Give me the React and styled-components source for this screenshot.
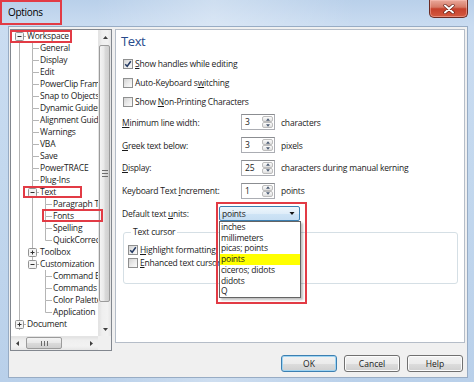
import React from "react";
import styled, { createGlobalStyle } from "styled-components";

const FONT = `"Open Sans", "Noto Sans", "DejaVu Sans", sans-serif`;
const LINE = "#b5b5b5";
const RED = "#e23b45";

const GlobalStyle = createGlobalStyle`
  html, body {
    margin: 0;
    padding: 0;
  }
  body {
    width: 474px;
    height: 382px;
    overflow: hidden;
    font-family: ${FONT};
    font-size: 8.5px;
    letter-spacing: -0.2px;
    color: #1b1b1b;
  }
  * {
    box-sizing: border-box;
  }
`;

const Window = styled.div`
  width: 474px;
  height: 382px;
  display: flex;
  flex-direction: column;
  background:
    linear-gradient(90deg, rgba(255,255,255,0) 20%, rgba(255,255,255,0.3) 45%, rgba(255,255,255,0) 75%),
    linear-gradient(180deg, #b9d0ea 0%, #cadcf1 7%, #c3d8ee 45%, #b9d0ea 100%);
`;

const TitleBar = styled.div`
  height: 26px;
  flex: none;
  display: flex;
  justify-content: space-between;
  align-items: flex-start;
`;

const TitleMark = styled.div`
  height: 25px;
  display: flex;
  align-items: center;
  padding: 0 17px 1px 6px;
  border: 2px solid ${RED};
  font-size: 10px;
  letter-spacing: -0.3px;
  color: #000;
`;

const CloseBtn = styled.div`
  width: 39px;
  height: 18px;
  margin-right: 6px;
  display: flex;
  align-items: center;
  justify-content: center;
  border: 1px solid #6b2a22;
  border-top: none;
  border-radius: 0 0 5px 5px;
  background: linear-gradient(180deg, #eaa99b 0%, #d67a67 42%, #c6412c 52%, #d45a40 100%);
  box-shadow: inset 0 0 0 1px rgba(255, 200, 190, 0.45);
`;

const Client = styled.div`
  flex: 1;
  margin: 0 6px 4px 8px;
  background: #f0f0f0;
  border: 1px solid #98acc4;
  display: grid;
  grid-template-columns: 102px 350px;
  column-gap: 3px;
  align-items: start;
  padding: 2px 2px 0 1px;
`;

/* ---------- tree ---------- */

const TreeBox = styled.div`
  height: 322px;
  display: flex;
  flex-direction: column;
  background: #fff;
  border: 1px solid #82878f;
`;

const TreeBody = styled.div`
  flex: 1;
  min-height: 0;
  display: flex;
`;

const TreeList = styled.div`
  flex: 1;
  min-width: 0;
  padding-left: 2px;
`;

const Row = styled.div`
  position: relative;
  height: 12px;
  display: flex;
  align-items: center;
`;

const Label = styled.span`
  flex: 1 1 auto;
  min-width: 0;
  padding-left: 1px;
  line-height: 12px;
  white-space: nowrap;
  overflow: hidden;
`;

const Mark = styled.span`
  position: absolute;
  z-index: 3;
  left: ${(p) => p.$left}px;
  top: ${(p) => p.$top}px;
  width: ${(p) => p.$width}px;
  height: ${(p) => p.$height}px;
  border: 2px solid ${RED};
  pointer-events: none;
`;

const VScroll = styled.div`
  width: 13px;
  flex: none;
  display: flex;
  flex-direction: column;
  background: linear-gradient(90deg, #e2e2e2 0%, #efefef 25%, #f2f2f2 70%, #e6e6e6 100%);
  border-left: 1px solid #e4e4e4;
`;

const ArrowCell = styled.div`
  flex: none;
  width: ${(p) => (p.$h ? "13px" : "auto")};
  height: ${(p) => (p.$h ? "auto" : "14px")};
  display: flex;
  align-items: center;
  justify-content: center;
`;

const VThumb = styled.div`
  height: 257px;
  margin: 1px 1px 0 0;
  display: flex;
  align-items: center;
  justify-content: center;
  border: 1px solid #9b9b9b;
  border-radius: 2px;
  background: linear-gradient(90deg, #f4f4f4 0%, #e9e9e9 45%, #dadada 55%, #cfcfcf 100%);
`;

const Spacer = styled.div`
  flex: 1;
`;

const HRow = styled.div`
  height: 14px;
  flex: none;
  display: flex;
`;

const HScroll = styled.div`
  flex: 1;
  display: flex;
  background: linear-gradient(180deg, #e2e2e2 0%, #efefef 25%, #f2f2f2 70%, #e6e6e6 100%);
  border-top: 1px solid #e4e4e4;
`;

const HThumb = styled.div`
  width: 36px;
  margin: 0 0 1px 2px;
  display: flex;
  align-items: center;
  justify-content: center;
  border: 1px solid #9b9b9b;
  border-radius: 2px;
  background: linear-gradient(180deg, #f4f4f4 0%, #e9e9e9 45%, #dadada 55%, #cfcfcf 100%);
`;

const Corner = styled.div`
  width: 13px;
  flex: none;
  background: #f0f0f0;
`;

/* ---------- right side ---------- */

const RightCol = styled.div`
  display: flex;
  flex-direction: column;
`;

const Panel = styled.div`
  height: 314px;
  background: #fff;
  border: 1px solid #b5bdc8;
  padding: 3px 6px 0 6px;
`;

const Heading = styled.div`
  margin-left: -1px;
  font-size: 13px;
  line-height: 16px;
  letter-spacing: -0.4px;
  color: #284a8c;
`;

const CheckList = styled.div`
  margin-top: 5px;
`;

const CheckRow = styled.div`
  height: ${(p) => p.$h || 19}px;
  display: flex;
  align-items: center;
  gap: 2px;
  padding-left: ${(p) => p.$pad ?? 1}px;
  white-space: nowrap;
`;

const Box = styled.span`
  width: 10px;
  height: 10px;
  flex: none;
  display: flex;
  align-items: center;
  justify-content: center;
  border: 1px solid #8e8f8f;
  background: linear-gradient(135deg, #d3d3d3 0%, #ececec 55%, #fbfbfb 100%);
`;

const Key = styled.span`
  text-decoration: underline;
`;

const FormRow = styled.div`
  height: 22.8px;
  display: flex;
  align-items: center;
  white-space: nowrap;
`;

const FieldLabel = styled.span`
  width: ${(p) => p.$w}px;
  flex: none;
`;

const Spin = styled.div`
  width: 34px;
  height: 16px;
  flex: none;
  display: flex;
  border: 1px solid #abadb3;
  border-top-color: #8b8d91;
  background: #fff;
`;

const SpinValue = styled.span`
  flex: 1;
  padding-left: 3px;
  line-height: 14px;
`;

const SpinButtons = styled.div`
  width: 12px;
  display: flex;
  flex-direction: column;
  padding: 1px 1px 1px 0;
`;

const SpinBtn = styled.div`
  flex: 1;
  display: flex;
  align-items: center;
  justify-content: center;
  border: 1px solid #bdbdbd;
  border-radius: 2px;
  background: linear-gradient(180deg, #fbfbfb, #dfdfdf);
`;

const Units = styled.span`
  margin-left: 6px;
`;

const ComboWrap = styled.div`
  position: relative;
  width: 81px;
  height: 15px;
`;

const Combo = styled.div`
  height: 100%;
  display: flex;
  align-items: center;
  justify-content: space-between;
  padding: 0 4px 0 2px;
  border: 1px solid #3c7fb1;
  border-radius: 2px;
  background: linear-gradient(180deg, #eef6fc 0%, #dfedf9 50%, #cfe4f6 51%, #c6def3 100%);
  line-height: 13px;
`;

const DropList = styled.div`
  position: absolute;
  z-index: 2;
  top: 15px;
  left: 0;
  width: 82px;
  background: #fff;
  border: 1px solid #646464;
  box-shadow: 2px 2px 2px rgba(0, 0, 0, 0.25);
`;

const Option = styled.div`
  height: 10.7px;
  line-height: 10.7px;
  padding-left: 1px;
  background: ${(p) => (p.$active ? "#ffff00" : "transparent")};
`;

const ComboMark = styled.span`
  position: absolute;
  z-index: 3;
  left: -3px;
  top: -4px;
  width: 91px;
  height: 102px;
  border: 2px solid ${RED};
  pointer-events: none;
`;

const Group = styled.fieldset`
  margin: 1.5px 0 0 1px;
  padding: 5px 8px 14px 4px;
  border: 1px solid #d5dfe5;
  border-radius: 3px;
  min-width: 0;
`;

const Legend = styled.legend`
  margin-left: 3px;
  padding: 0 2px;
  line-height: 12px;
`;

const ButtonRow = styled.div`
  margin-top: 12px;
  display: flex;
  justify-content: flex-end;
  gap: 7px;
  padding-right: 2px;
`;

const Button = styled.button`
  width: 56px;
  height: 17px;
  padding: 0;
  font: inherit;
  color: #1b1b1b;
  border: 1px solid ${(p) => (p.$primary ? "#3c7fb1" : "#707070")};
  border-radius: 3px;
  background: linear-gradient(180deg, #f2f2f2 0%, #ebebeb 50%, #dddddd 51%, #cfcfcf 100%);
  box-shadow: ${(p) => (p.$primary ? "inset 0 0 0 1px #9fd4f2" : "inset 0 0 0 1px #fcfcfc")};
`;

/* ---------- drawings ---------- */

const CloseX = () => (
  <svg width="12" height="10" viewBox="0 0 12 10">
    <path d="M2 1.5 L10 8.5 M10 1.5 L2 8.5" stroke="#5a1a12" strokeWidth="3.2" strokeLinecap="round" />
    <path d="M2 1.5 L10 8.5 M10 1.5 L2 8.5" stroke="#fff" strokeWidth="2" strokeLinecap="round" />
  </svg>
);

const Tri = ({ dir, size = 5, color = "#3e3e3e" }) => {
  const paths = {
    up: "M0 3 L2.5 0 L5 3 Z",
    down: "M0 0 L5 0 L2.5 3 Z",
    left: "M3 0 L3 5 L0 2.5 Z",
    right: "M0 0 L3 2.5 L0 5 Z",
  };
  const vertical = dir === "up" || dir === "down";
  return (
    <svg width={vertical ? size : 3} height={vertical ? 3 : size} viewBox={vertical ? "0 0 5 3" : "0 0 3 5"}>
      <path d={paths[dir]} fill={color} />
    </svg>
  );
};

const Grip = ({ horizontal }) =>
  horizontal ? (
    <svg width="7" height="5" viewBox="0 0 7 5">
      <path d="M0.5 0 V5 M3.5 0 V5 M6.5 0 V5" stroke="#6d6d6d" />
    </svg>
  ) : (
    <svg width="6" height="7" viewBox="0 0 6 7">
      <path d="M0 0.5 H6 M0 3.5 H6 M0 6.5 H6" stroke="#6d6d6d" />
    </svg>
  );

const Check = () => (
  <svg width="8" height="8" viewBox="0 0 8 8">
    <path d="M1.2 4.2 L3.2 6.3 L6.8 1.3" fill="none" stroke="#243a63" strokeWidth="1.5" />
  </svg>
);

const Guide = ({ on }) => (
  <svg width="13" height="12" viewBox="0 0 13 12" style={{ flex: "none" }}>
    {on && <line x1="6.5" y1="0" x2="6.5" y2="12" stroke={LINE} />}
  </svg>
);

const Connector = ({ up, down, box }) => (
  <svg width="13" height="12" viewBox="0 0 13 12" style={{ flex: "none" }}>
    {up && <line x1="6.5" y1="0" x2="6.5" y2="6.5" stroke={LINE} />}
    {down && <line x1="6.5" y1="6.5" x2="6.5" y2="12" stroke={LINE} />}
    <line x1="6.5" y1="6.5" x2="13" y2="6.5" stroke={LINE} />
    {box && (
      <g>
        <rect x="2.5" y="2.5" width="8" height="8" rx="1" fill="#f3f3f3" stroke="#939393" />
        <line x1="4.5" y1="6.5" x2="8.5" y2="6.5" stroke="#2f2f2f" />
        {box === "plus" && <line x1="6.5" y1="4.5" x2="6.5" y2="8.5" stroke="#2f2f2f" />}
      </g>
    )}
  </svg>
);

/* ---------- data ---------- */

const leaf = (label, guides, last = false, mark) => ({ label, guides, up: true, down: !last, mark });

const TREE = [
  { label: "Workspace", guides: [], up: false, down: true, box: "minus", mark: { left: -3, top: 0, width: 62, height: 13 } },
  ...["General", "Display", "Edit", "PowerClip Frame", "Snap to Objects", "Dynamic Guides", "Alignment Guides", "Warnings", "VBA", "Save", "PowerTRACE", "Plug-Ins"].map((l) => leaf(l, [true])),
  { label: "Text", guides: [true], up: true, down: true, box: "minus", mark: { left: 10, top: 0, width: 59, height: 12 } },
  leaf("Paragraph Text", [true, true]),
  leaf("Fonts", [true, true], false, { left: 29, top: -1, width: 61, height: 13 }),
  leaf("Spelling", [true, true]),
  leaf("QuickCorrect", [true, true], true),
  { label: "Toolbox", guides: [true], up: true, down: true, box: "plus" },
  { label: "Customization", guides: [true], up: true, down: false, box: "minus" },
  leaf("Command Bars", [true, false]),
  leaf("Commands", [true, false]),
  leaf("Color Palette", [true, false]),
  leaf("Application", [true, false], true),
  { label: "Document", guides: [], up: true, down: true, box: "plus" },
];

const UNITS = ["inches", "millimeters", "picas; points", "points", "ciceros; didots", "didots", "Q"];

const SPINS = [
  { label: <><Key>M</Key>inimum line width:</>, value: "3", unit: "characters" },
  { label: <><Key>G</Key>reek text below:</>, value: "3", unit: "pixels" },
  { label: <><Key>D</Key>isplay:</>, value: "25", unit: "characters during manual kerning" },
  { label: <>Keyboard Text <Key>I</Key>ncrement:</>, value: "1", unit: "points" },
];

/* ---------- parts ---------- */

const CheckItem = ({ checked, children, h, pad }) => (
  <CheckRow $h={h} $pad={pad}>
    <Box>{checked && <Check />}</Box>
    <span>{children}</span>
  </CheckRow>
);

const Spinner = ({ value }) => (
  <Spin>
    <SpinValue>{value}</SpinValue>
    <SpinButtons>
      <SpinBtn>
        <Tri dir="up" size={4} color="#4a5a72" />
      </SpinBtn>
      <SpinBtn>
        <Tri dir="down" size={4} color="#4a5a72" />
      </SpinBtn>
    </SpinButtons>
  </Spin>
);

const Tree = () => (
  <TreeBox>
    <TreeBody>
      <TreeList>
        {TREE.map((item) => (
          <Row key={item.label}>
            {item.guides.map((on, i) => (
              <Guide key={i} on={on} />
            ))}
            <Connector up={item.up} down={item.down} box={item.box} />
            <Label>{item.label}</Label>
            {item.mark && (
              <Mark $left={item.mark.left} $top={item.mark.top} $width={item.mark.width} $height={item.mark.height} />
            )}
          </Row>
        ))}
      </TreeList>
      <VScroll>
        <ArrowCell>
          <Tri dir="up" />
        </ArrowCell>
        <VThumb>
          <Grip />
        </VThumb>
        <Spacer />
        <ArrowCell>
          <Tri dir="down" />
        </ArrowCell>
      </VScroll>
    </TreeBody>
    <HRow>
      <HScroll>
        <ArrowCell $h>
          <Tri dir="left" />
        </ArrowCell>
        <HThumb>
          <Grip horizontal />
        </HThumb>
        <Spacer />
        <ArrowCell $h>
          <Tri dir="right" />
        </ArrowCell>
      </HScroll>
      <Corner />
    </HRow>
  </TreeBox>
);

export default function App() {
  return (
    <>
      <GlobalStyle />
      <Window>
        <TitleBar>
          <TitleMark>Options</TitleMark>
          <CloseBtn>
            <CloseX />
          </CloseBtn>
        </TitleBar>
        <Client>
          <Tree />
          <RightCol>
            <Panel>
              <Heading>Text</Heading>
              <CheckList>
                <CheckItem checked>
                  <Key>S</Key>how handles while editing
                </CheckItem>
                <CheckItem>
                  Auto-Keyboard s<Key>w</Key>itching
                </CheckItem>
                <CheckItem>
                  Show <Key>N</Key>on-Printing Characters
                </CheckItem>
              </CheckList>
              {SPINS.map((s) => (
                <FormRow key={s.unit + s.value}>
                  <FieldLabel $w={119}>{s.label}</FieldLabel>
                  <Spinner value={s.value} />
                  <Units>{s.unit}</Units>
                </FormRow>
              ))}
              <FormRow>
                <FieldLabel $w={97}>
                  Default text <Key>u</Key>nits:
                </FieldLabel>
                <ComboWrap>
                  <Combo>
                    <span>points</span>
                    <Tri dir="down" size={6} color="#111" />
                  </Combo>
                  <DropList>
                    {UNITS.map((u) => (
                      <Option key={u} $active={u === "points"}>
                        {u}
                      </Option>
                    ))}
                  </DropList>
                  <ComboMark />
                </ComboWrap>
              </FormRow>
              <Group>
                <Legend>Text cursor</Legend>
                <CheckItem checked h={13} pad={0}>
                  <Key>H</Key>ighlight formatting
                </CheckItem>
                <CheckItem h={13} pad={0}>
                  <Key>E</Key>nhanced text cursor
                </CheckItem>
              </Group>
            </Panel>
            <ButtonRow>
              <Button $primary>OK</Button>
              <Button>Cancel</Button>
              <Button>Help</Button>
            </ButtonRow>
          </RightCol>
        </Client>
      </Window>
    </>
  );
}
